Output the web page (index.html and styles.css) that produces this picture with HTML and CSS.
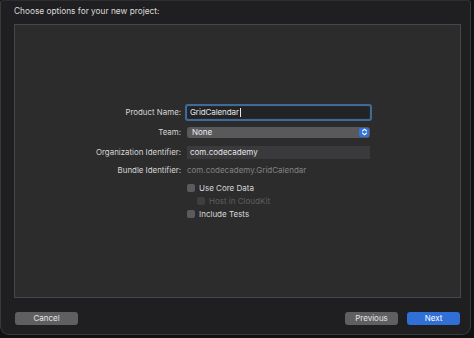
FILE: index.html
```html
<!DOCTYPE html>
<html lang="en">
<head>
<meta charset="utf-8">
<title>Choose options for your new project</title>
<link rel="stylesheet" href="styles.css">
</head>
<body>
<div class="window">
  <div class="title">Choose options for your new project:</div>
  <div class="panel">
    <div class="form">
      <div class="row r1">
        <div class="label">Product Name:</div>
        <div class="field focus"><span class="val">GridCalendar</span><span class="caret"></span></div>
      </div>
      <div class="row r2">
        <div class="label">Team:</div>
        <div class="popup"><span class="val">None</span>
          <span class="stepper"><svg width="7" height="8" viewBox="0 0 7 8"><path d="M1.5 3 L3.5 1.2 L5.5 3 M1.5 5 L3.5 6.8 L5.5 5" fill="none" stroke="#fff" stroke-width="1.1" stroke-linecap="round" stroke-linejoin="round"/></svg></span>
        </div>
      </div>
      <div class="row r3">
        <div class="label">Organization Identifier:</div>
        <div class="field plain"><span class="val">com.codecademy</span></div>
      </div>
      <div class="row r4">
        <div class="label">Bundle Identifier:</div>
        <div class="static">com.codecademy.GridCalendar</div>
      </div>
      <div class="row r5">
        <div class="label"></div>
        <div class="check"><span class="box"></span><span>Use Core Data</span></div>
      </div>
      <div class="row r6">
        <div class="label"></div>
        <div class="check sub disabled"><span class="box"></span><span>Host in CloudKit</span></div>
      </div>
      <div class="row r7">
        <div class="label"></div>
        <div class="check"><span class="box"></span><span>Include Tests</span></div>
      </div>
    </div>
  </div>
  <div class="footer">
    <button class="btn">Cancel</button>
    <div class="right">
      <button class="btn">Previous</button>
      <button class="btn primary">Next</button>
    </div>
  </div>
</div>
</body>
</html>
```

FILE: styles.css
```css
html, body {
  margin: 0;
  padding: 0;
  background: #111112;
  width: 474px;
  height: 338px;
  overflow: hidden;
  font-family: Inter, "Liberation Sans", sans-serif;
}

.window {
  box-sizing: border-box;
  width: 471px;
  height: 335px;
  background: #1f1f21;
  border: 1px solid #3a3a3c;
  border-top-color: #2c2c2e;
  border-radius: 3px 3px 9px 9px;
  display: flex;
  flex-direction: column;
}

.title {
  height: 23px;
  padding-left: 13px;
  box-sizing: border-box;
  padding-top: 5px;
  font-size: 8.3px;
  color: #dcdcdc;
}

.panel {
  box-sizing: border-box;
  margin: 0 9px 0 13px;
  height: 274px;
  background: #2c2c2d;
  border: 1px solid #474749;
}

.form {
  padding-top: 80px;
}

.row {
  display: flex;
  align-items: center;
  height: 12px;
}

.r1 { height: 14px; }
.r2 { margin-top: 7px; }
.r3 { height: 14px; margin-top: 7px; }
.r4 { margin-top: 5px; }
.r5 { margin-top: 6px; }
.r6 { margin-top: 1px; }
.r7 { margin-top: 1px; }

.label {
  width: 166px;
  text-align: right;
  font-size: 7.9px;
  color: #d6d6d6;
  flex: none;
}

.field, .popup {
  margin-left: 6px;
  width: 183px;
  box-sizing: border-box;
  display: flex;
  align-items: center;
  font-size: 8px;
  color: #e6e6e6;
}

.field {
  height: 13px;
  padding-left: 3px;
}

.field.focus {
  background: #232325;
  border: 1px solid #27282a;
  box-shadow: 0 0 0 2px #3d6a96;
  border-radius: 1px;
  padding-left: 2px;
  letter-spacing: -0.1px;
}

.field.plain {
  background: #3a3a3c;
}

.caret {
  display: inline-block;
  width: 1px;
  height: 9px;
  background: #e8e8e8;
  margin-left: 1px;
}

.popup {
  height: 11px;
  background: #59595c;
  border-radius: 3px;
  padding-left: 5px;
  justify-content: space-between;
  padding-right: 1px;
}

.popup .val {
  color: #ececec;
}

.stepper {
  width: 10px;
  height: 9px;
  background: #2f74dc;
  border-radius: 2px;
  display: flex;
  align-items: center;
  justify-content: center;
}

.static {
  margin-left: 6px;
  font-size: 8px;
  color: #828284;
}

.check {
  margin-left: 6px;
  display: flex;
  align-items: center;
  font-size: 8px;
  color: #d8d8d8;
}

.check .box {
  width: 8px;
  height: 8px;
  border-radius: 2px;
  background: #5b5b5e;
  margin-right: 4px;
}

.check.sub {
  margin-left: 16px;
}

.check.disabled {
  color: #5f5f61;
}

.check.disabled .box {
  background: #3e3e40;
}

.footer {
  display: flex;
  justify-content: space-between;
  align-items: center;
  padding: 14px 10px 0 14px;
}

.right {
  display: flex;
  gap: 9px;
}

.btn {
  font-family: Inter, "Liberation Sans", sans-serif;
  font-size: 8px;
  color: #e4e4e4;
  background: #5f5f62;
  border: none;
  border-radius: 3px;
  height: 13px;
  width: 63px;
  padding: 0;
  line-height: 13px;
}

.right .btn {
  width: 53px;
}

.btn.primary {
  background: #2f6fd6;
  color: #fff;
}
```
